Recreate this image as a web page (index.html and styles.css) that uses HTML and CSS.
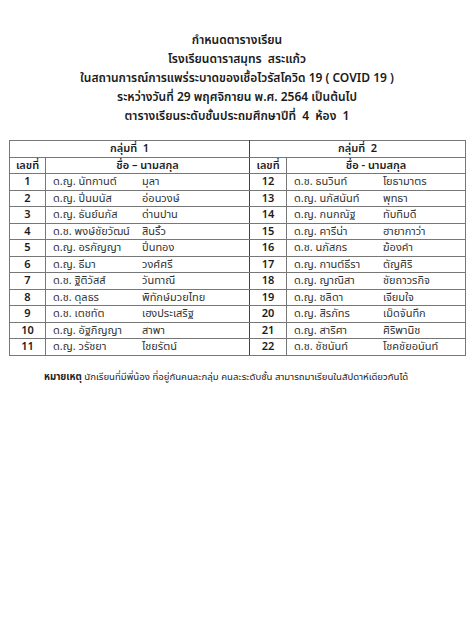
FILE: index.html
```html
<!DOCTYPE html>
<html lang="th">
<head>
<meta charset="utf-8">
<link rel="stylesheet" href="styles.css">
</head>
<body>
<div class="page">
  <div class="titles">
    <div class="t">กำหนดตารางเรียน</div>
    <div class="t">โรงเรียนดาราสมุทร&nbsp; สระแก้ว</div>
    <div class="t">ในสถานการณ์การแพร่ระบาดของเชื้อไวรัสโควิด 19 ( COVID 19 )</div>
    <div class="t">ระหว่างวันที่ 29 พฤศจิกายน พ.ศ. 2564 เป็นต้นไป</div>
    <div class="t">ตารางเรียนระดับชั้นประถมศึกษาปีที่&nbsp; 4&nbsp; ห้อง&nbsp; 1</div>
  </div>
  <table class="grid">
    <colgroup>
      <col class="c-no1"><col class="c-name1"><col class="c-no2"><col class="c-name2">
    </colgroup>
    <tr class="hd">
      <th colspan="2" class="gsep">กลุ่มที่&nbsp; 1</th>
      <th colspan="2">กลุ่มที่&nbsp; 2</th>
    </tr>
    <tr class="hd">
      <th>เลขที่</th><th class="gsep">ชื่อ – นามสกุล</th>
      <th>เลขที่</th><th>ชื่อ - นามสกุล</th>
    </tr>
    <tr><td class="no">1</td><td class="nm gsep"><span class="fn">ด.ญ. นัทกานต์</span>มุลา</td><td class="no">12</td><td class="nm"><span class="fn">ด.ช. ธนวินท์</span>โยธามาตร</td></tr>
    <tr><td class="no">2</td><td class="nm gsep"><span class="fn">ด.ญ. ปิ่นมนัส</span>อ่อนวงษ์</td><td class="no">13</td><td class="nm"><span class="fn">ด.ญ. นภัสนันท์</span>พุทธา</td></tr>
    <tr><td class="no">3</td><td class="nm gsep"><span class="fn">ด.ญ. ธันย์นภัส</span>ด่านปาน</td><td class="no">14</td><td class="nm"><span class="fn">ด.ญ. กนกณัฐ</span>ทับทิมดี</td></tr>
    <tr><td class="no">4</td><td class="nm gsep"><span class="fn">ด.ช. พงษ์ชัยวัฒน์</span>สินริ้ว</td><td class="no">15</td><td class="nm"><span class="fn">ด.ญ. คารีน่า</span>ฮายากาว่า</td></tr>
    <tr><td class="no">5</td><td class="nm gsep"><span class="fn">ด.ญ. อรกัญญา</span>ปิ่นทอง</td><td class="no">16</td><td class="nm"><span class="fn">ด.ช. นภัสกร</span>ฆ้องคำ</td></tr>
    <tr><td class="no">6</td><td class="nm gsep"><span class="fn">ด.ญ. ธีมา</span>วงศ์ศรี</td><td class="no">17</td><td class="nm"><span class="fn">ด.ญ. กานต์ธีรา</span>ตัญศิริ</td></tr>
    <tr><td class="no">7</td><td class="nm gsep"><span class="fn">ด.ช. ฐิติวัสส์</span>วันทาณี</td><td class="no">18</td><td class="nm"><span class="fn">ด.ญ. ญาณิสา</span>ชัยถาวรกิจ</td></tr>
    <tr><td class="no">8</td><td class="nm gsep"><span class="fn">ด.ช. ดุลธร</span>พิทักษ์มวยไทย</td><td class="no">19</td><td class="nm"><span class="fn">ด.ญ. ชลิดา</span>เจียมใจ</td></tr>
    <tr><td class="no">9</td><td class="nm gsep"><span class="fn">ด.ช. เตชทัต</span>เฮงประเสริฐ</td><td class="no">20</td><td class="nm"><span class="fn">ด.ญ. สิรภัทร</span>เม็ดจันทึก</td></tr>
    <tr><td class="no">10</td><td class="nm gsep"><span class="fn">ด.ญ. อัฐภิญญา</span>สาพา</td><td class="no">21</td><td class="nm"><span class="fn">ด.ญ. สาริศา</span>ศิริพานิช</td></tr>
    <tr><td class="no">11</td><td class="nm gsep"><span class="fn">ด.ญ. วรัชยา</span>ไชยรัตน์</td><td class="no">22</td><td class="nm"><span class="fn">ด.ช. ชัชนันท์</span>โชคชัยอนันท์</td></tr>
  </table>
  <p class="note"><b>หมายเหตุ</b> นักเรียนที่มีพี่น้อง ที่อยู่กันคนละกลุ่ม คนละระดับชั้น สามารถมาเรียนในสัปดาห์เดียวกันได้</p>
</div>
</body>
</html>
```
FILE: styles.css
```css
html, body {
  margin: 0;
  padding: 0;
  background: #ffffff;
}
body {
  font-family: "Noto Sans Thai", "Noto Sans", "DejaVu Sans", sans-serif;
  color: #1a1a1a;
}
.page {
  width: 474px;
  padding: 31px 9px 0 9px;
  box-sizing: border-box;
}
.titles {
  text-align: center;
  font-weight: 600;
  font-size: 12px;
  line-height: 19px;
  margin-bottom: 14px;
}
.grid {
  width: 456px;
  border-collapse: collapse;
  table-layout: fixed;
  font-size: 11px;
  border: 1px solid #444;
}
.c-no1 { width: 36px; }
.c-name1 { width: 204px; }
.c-no2 { width: 37px; }
.c-name2 { width: 179px; }
.grid th, .grid td {
  border: 1px solid #777;
  height: 15.5px;
  padding: 0;
  line-height: 15px;
  white-space: nowrap;
  overflow: hidden;
}
.grid th {
  font-weight: 600;
  text-align: center;
}
.grid .gsep {
  border-right: 1px solid #444;
}
.grid td.no {
  text-align: center;
  font-weight: 600;
}
.grid td.nm {
  padding-left: 7px;
  color: #333;
}
.fn {
  display: inline-block;
  width: 89px;
}
.note {
  margin: 14px 0 0 35px;
  font-size: 9.6px;
  color: #222;
}
.note b {
  font-weight: 700;
}
```
